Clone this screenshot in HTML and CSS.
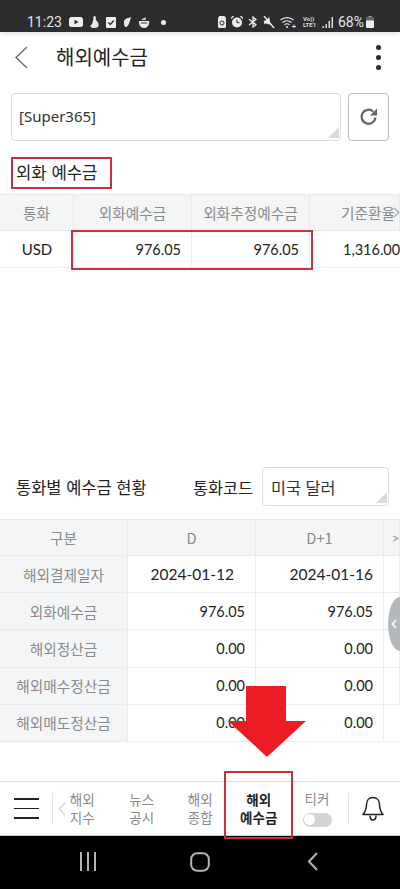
FILE: index.html
```html
<!DOCTYPE html>
<html lang="ko">
<head>
<meta charset="utf-8">
<title>해외예수금</title>
<link rel="stylesheet" href="styles.css">
</head>
<body>
<div class="phone">
  <div class="status">
    <div class="status-left">
      <span class="clock">11:23</span>
      <svg class="si" width="14" height="10" viewBox="0 0 14 10"><rect width="14" height="10" rx="2.5" fill="#eee"/><path d="M5.5 2.8v4.4L9.5 5z" fill="#2c2d2f"/></svg>
      <svg class="si" width="9" height="12" viewBox="0 0 11 12" preserveAspectRatio="none"><path d="M5.5 0c1.5 0 2 1.300 1.500 2.500L8 5c1.500.5 2.500 2 2.500 4 .5 2-2 3-5 3s-5-.5-5-2c0-1 1.500-1 2-2L3.500 5C4 4 4.500 3 4 2c0-1 .5-2 1.500-2z" fill="#e8e8e8"/></svg>
      <svg class="si" width="10" height="11" viewBox="0 0 10 11"><rect width="10" height="11" rx="1" fill="#eee"/><path d="M2.300 5.500l2 2 3.500-4" fill="none" stroke="#2c2d2f" stroke-width="1.200"/></svg>
      <svg class="si" width="9" height="10" viewBox="0 0 10 10" preserveAspectRatio="none"><path d="M1 5c0-2 3-4 5-4l3-1-2 6c-1 2-2 4-4 4C1.500 10 1 7 1 5z" fill="#e8e8e8"/></svg>
      <svg class="si" width="12" height="11" viewBox="0 0 13 11" preserveAspectRatio="none"><path d="M0 4h11v1c0 3-2 6-5.500 6S0 8 0 5z" fill="#eee"/><path d="M3 3c0-2 3-1 4-3 1 2 0 3-1 3z" fill="#ddd"/><path d="M2 6h7" stroke="#2c2d2f"/></svg>
      <span class="dot"></span>
    </div>
    <div class="status-right">
      <svg class="si" width="8" height="12" viewBox="0 0 8 12"><path d="M1.500 0h5L8 2v9l-1 1H1l-1-1V2z" fill="#e8e8e8"/><circle cx="4" cy="7" r="2" fill="none" stroke="#2c2d2f"/></svg>
      <svg class="si" width="12" height="12" viewBox="0 0 12 12"><circle cx="6" cy="6.500" r="5" fill="#eee"/><path d="M6 3.500v3.200h2.500" fill="none" stroke="#2c2d2f"/><path d="M0 2.500L2.500 0M12 2.500L9.500 0" stroke="#eee" stroke-width="1.300"/></svg>
      <svg class="si" width="10" height="12" viewBox="0 0 10 12"><path d="M1 3.200l7 5.500L5 11V1l3 2.500-7 5.500" fill="none" stroke="#eee" stroke-width="1.300"/></svg>
      <svg class="si" width="12" height="12" viewBox="0 0 12 12"><path d="M1 4h2l4-3v8L3 7H1z" fill="#eee" transform="rotate(-8 6 6)"/><path d="M1 0l10 12" stroke="#eee" stroke-width="1.400"/></svg>
      <svg class="si" width="16" height="12" viewBox="0 0 16 12"><path d="M.5 4a10 10 0 0 1 13 0M2.500 6.500a7 7 0 0 1 9 0M4.500 8.800a4 4 0 0 1 5 0" fill="none" stroke="#eee" stroke-width="1.100"/><circle cx="7" cy="11" r="1" fill="#eee"/><path d="M12 10.500h4M14 8.500v4" stroke="#ddd"/></svg>
      <span class="volte">Vo)) <br>LTE1</span>
      <svg class="si" width="11" height="11" viewBox="0 0 11 11"><path d="M.5 9h1.400v2H.5zM3.500 7h1.400v4H3.500zM6.500 4H8v7H6.500zM9.500 0H11v11H9.500z" fill="#ddd"/></svg>
      <span class="batt-text">68%</span>
      <svg class="si" width="8" height="12" viewBox="0 0 8 12"><rect x="2.500" width="3" height="2" fill="#aaa"/><rect y="1" width="8" height="11" rx="1.200" fill="#666"/><path d="M0 4.500h8V11l-1 1H1l-1-1z" fill="#eee"/></svg>
    </div>
  </div>

  <header class="top">
    <svg class="back" width="14" height="23" viewBox="0 0 14 23"><path d="M13 1L2 11.500 13 22" fill="none" stroke="#666" stroke-width="1.300"/></svg>
    <h1 class="title">해외예수금</h1>
    <div class="kebab"><span></span><span></span><span></span></div>
  </header>

  <main class="content">
    <div class="account-row">
      <div class="select account"><span>[Super365]</span><i class="grip"></i></div>
      <button class="refresh" type="button">
        <svg width="20" height="20" viewBox="0 0 20 20"><path d="M16.500 10.500a7 7 0 1 1-2.300-6" fill="none" stroke="#666" stroke-width="2.300"/><path d="M18 1.500v7h-7z" fill="#666"/></svg>
      </button>
    </div>

    <div class="section-head"><h2 class="section-title">외화 예수금</h2></div>

    <div class="grid grid-top">
      <div class="hc">통화</div><div class="hc">외화예수금</div><div class="hc">외화추정예수금</div><div class="hc hc-clip">기준환율<i class="more-tri"></i></div>
      <div class="dc ctr">USD</div><div class="dc">976.05</div><div class="dc">976.05</div><div class="dc dc-clip">1,316.00</div>
    </div>

    <div class="sub-row">
      <h3 class="sub-title">통화별 예수금 현황</h3>
      <span class="code-label">통화코드</span>
      <div class="select currency"><span>미국 달러</span><i class="grip"></i></div>
    </div>

    <div class="grid grid-bottom">
      <div class="hc">구분</div><div class="hc">D</div><div class="hc">D+1</div><div class="hc hc-more">&gt;</div>
      <div class="lc">해외결제일자</div><div class="dc date date-first">2024-01-12</div><div class="dc date">2024-01-16</div><div class="dc"></div>
      <div class="lc">외화예수금</div><div class="dc">976.05</div><div class="dc">976.05</div><div class="dc"></div>
      <div class="lc">해외정산금</div><div class="dc">0.00</div><div class="dc">0.00</div><div class="dc"></div>
      <div class="lc">해외매수정산금</div><div class="dc">0.00</div><div class="dc">0.00</div><div class="dc"></div>
      <div class="lc">해외매도정산금</div><div class="dc">0.00</div><div class="dc">0.00</div><div class="dc"></div>
    </div>
  </main>

  <nav class="tabs">
    <div class="burger"><span></span><span></span><span></span></div>
    <div class="vline"></div>
    <svg class="tab-prev" width="8" height="14" viewBox="0 0 8 14"><path d="M7 1L1.500 7 7 13" fill="none" stroke="#ddd" stroke-width="1.800"/></svg>
    <div class="tab">해외<br>지수</div>
    <div class="tab">뉴스<br>공시</div>
    <div class="tab">해외<br>종합</div>
    <div class="tab active">해외<br>예수금</div>
    <div class="tab ticker">티커<span class="toggle"><span class="knob"></span></span></div>
    <div class="vline vline-right"></div>
    <svg class="bell" width="22" height="26" viewBox="0 0 22 26"><path d="M11 1.500c-4 0-6.500 3-6.500 7 0 5-1.500 7.500-3.500 10h20c-2-2.500-3.500-5-3.500-10 0-4-2.500-7-6.500-7z" fill="none" stroke="#222" stroke-width="1.500" stroke-linejoin="round"/><path d="M8 19.500c0 3 1.500 4.500 3 4.500s3-1.500 3-4.500" fill="none" stroke="#222" stroke-width="1.500"/></svg>
  </nav>

  <div class="sysbar">
    <svg width="18" height="19" viewBox="0 0 18 19"><path d="M2 0v19M9 0v19M16 0v19" stroke="#b5b5b5" stroke-width="2"/></svg>
    <svg width="20" height="20" viewBox="0 0 20 20"><rect x="1.200" y="1.200" width="17.600" height="17.600" rx="6" fill="none" stroke="#b5b5b5" stroke-width="2"/></svg>
    <svg class="sys-back" width="11" height="19" viewBox="0 0 11 19"><path d="M10 1L2 9.500 10 18" fill="none" stroke="#b5b5b5" stroke-width="2"/></svg>
  </div>

  <div class="mark mark-title"></div>
  <div class="mark mark-values"></div>
  <div class="mark mark-tab"></div>
  <div class="handle"><svg width="6" height="10" viewBox="0 0 6 10"><path d="M5 1L1.500 5 5 9" fill="none" stroke="#fff" stroke-width="1.800"/></svg></div>
  <svg class="arrow" width="78" height="71" viewBox="0 0 78 71"><path d="M18 0h40v35h20L39 71 0 35h18z" fill="#ed1c24"/></svg>
</div>
</body>
</html>
```
FILE: styles.css
```css
* { box-sizing: border-box; }
html, body { margin: 0; padding: 0; background: #fff; }
body { font-family: "Lato", "Noto Sans CJK KR", sans-serif; color: #222; }
.phone { position: relative; width: 400px; height: 889px; overflow: hidden; display: flex; flex-direction: column; }

.status { height: 32px; flex: none; background: #2c2d2f; color: #e4e4e4; display: flex; justify-content: space-between; align-items: flex-end; padding: 0 26px 3px 27px; box-shadow: 0 2px 5px rgba(0,0,0,.12); position: relative; }
.status-left, .status-right { display: flex; align-items: center; height: 14px; }
.status-left { gap: 7px; }
.status-right { gap: 5px; }
.si { display: block; flex: none; }
.clock { font: 14px/14px "Roboto", sans-serif; margin-right: -1px; width: 36px; }
.dot { width: 5px; height: 5px; border-radius: 50%; background: #eee; margin-left: 3px; }
.volte { font: 700 6px/6.500px "Roboto", sans-serif; width: 14px; color: #ddd; white-space: nowrap; margin-left: 2px; }
.batt-text { font: 14px/14px "Roboto", sans-serif; margin-left: 0; margin-right: -3px; }

.top { height: 51px; flex: none; display: flex; align-items: center; padding: 0 19px 0 14px; }
.back { flex: none; margin-right: 28px; }
.title { margin: 0 0 2px; flex: 1; font: 400 20px/24px "Noto Sans CJK KR", sans-serif; color: #222; }
.kebab { display: flex; flex-direction: column; gap: 5px; }
.kebab span { width: 5px; height: 5px; border-radius: 50%; background: #2a2a2a; }

.content { flex: 1; min-height: 0; display: flex; flex-direction: column; }
.account-row { display: flex; gap: 7px; padding: 10px 11px 0; height: 58px; flex: none; }
.select { position: relative; background: #fff; border: 1px solid #dcdcdc; border-radius: 4px; display: flex; align-items: center; font-size: 15px; color: #333; }
.account { flex: 1; padding: 0 7px; }
.account span { font-family: "Noto Sans", sans-serif; font-size: 15px; position: relative; top: -1px; }
.grip { position: absolute; right: 1px; bottom: 2px; width: 0; height: 0; border-style: solid; border-width: 0 0 11px 11px; border-color: transparent transparent #d8d8d8 transparent; }
.refresh { width: 41px; padding: 0; background: #fff; border: 1px solid #bbb; border-radius: 4px; display: flex; align-items: center; justify-content: center; }

.section-head { height: 53px; flex: none; padding: 16px 0 0 16px; }
.section-title { margin: 0; font: 400 16.700px/31px "Noto Sans CJK KR", sans-serif; color: #222; }

.grid { display: grid; flex: none; background: #fff; }
.grid-top { grid-template-columns: 74px 118px 118px 90px; grid-auto-rows: 37px; height: 247px; }
.grid-bottom { grid-template-columns: 128px 128px 128px 16px; grid-template-rows: 37px repeat(5, 37.200px); height: 224px; }
.hc, .lc { background: #f4f5f7; color: #8a8a8a; font-family: "Noto Sans CJK KR", sans-serif; font-size: 14.700px; display: flex; align-items: center; justify-content: center; white-space: nowrap; border-right: 1px solid #e8eaed; border-bottom: 1px solid #e8eaed; }
.hc { border-top: 1px solid #e8eaed; }
.hc:last-child, .dc:last-child { border-right: 0; }
.hc-clip { justify-content: flex-start; padding-left: 31px; overflow: hidden; position: relative; }
.more-tri { position: absolute; right: 1px; top: 14px; width: 7px; height: 7px; border-top: 1.500px solid #999; border-right: 1.500px solid #999; transform: rotate(45deg); }
.hc-more { font-family: "Lato", sans-serif; font-size: 14px; color: #999; overflow: hidden; padding-left: 8px; }
.dc { display: flex; align-items: center; justify-content: flex-end; padding-right: 10px; font-size: 14.500px; color: #222; white-space: nowrap; border-right: 1px solid #eceef0; border-bottom: 1px solid #eceef0; }
.ctr { justify-content: center; padding-right: 0; padding-left: 1px; font-size: 15px; }
.date { font-size: 15.500px; }
.date-first { padding-right: 21px; }
.dc-clip { justify-content: flex-start; padding: 0 0 0 33px; overflow: hidden; }

.sub-row { display: flex; align-items: center; height: 78px; flex: none; padding: 26px 11px 13px 16px; }
.sub-title { margin: 0; font: 400 16.500px/20px "Noto Sans CJK KR", sans-serif; color: #222; width: 177px; white-space: nowrap; }
.code-label { font: 400 16.300px/20px "Noto Sans CJK KR", sans-serif; width: 69px; white-space: nowrap; }
.currency { flex: 1; height: 39px; padding: 0 8px; font-family: "Noto Sans CJK KR", sans-serif; font-size: 16.300px; }

.tabs { height: 55px; flex: none; background: #fff; border-top: 1px solid #ddd; border-bottom: 1px solid #ccc; display: flex; align-items: center; position: relative; padding-left: 14px; }
.burger { width: 25px; display: flex; flex-direction: column; gap: 8px; margin-right: 13px; }
.burger span { height: 1.500px; background: #222; }
.vline { width: 1px; height: 31px; background: #e4e4e4; flex: none; }
.vline-right { margin-left: 2px; }
.tab-prev { position: absolute; left: 58px; top: 20px; }
.tab { width: 58.500px; flex: none; text-align: center; font: 400 13.500px/18px "Noto Sans CJK KR", sans-serif; color: #8a8a8a; margin-top: -2px; }
.tab:nth-of-type(4) { margin-left: 1px; }
.tab.active { color: #222; font-weight: 700; }
.ticker { display: flex; flex-direction: column; align-items: center; gap: 6px; width: 58px; }
.toggle { display: block; width: 29px; height: 14px; border-radius: 7px; background: #d4d4d4; position: relative; }
.knob { position: absolute; left: 1.500px; top: 1.500px; width: 11px; height: 11px; border-radius: 50%; background: #fff; }
.bell { flex: none; margin-left: 13px; }

.sysbar { height: 53px; flex: none; background: #000; display: flex; align-items: center; gap: 93px; padding: 0 0 2px 79px; }
.sys-back { margin-left: 4px; }

.mark { position: absolute; border: 2px solid #c8323c; pointer-events: none; }
.mark-title { left: 11px; top: 157px; width: 101px; height: 32px; }
.mark-values { left: 71px; top: 230px; width: 242px; height: 40px; }
.mark-tab { left: 224px; top: 771px; width: 69px; height: 68px; }
.handle { position: absolute; left: 388px; top: 597px; width: 24px; height: 54px; border-radius: 50%; background: #b4b8bc; display: flex; align-items: center; padding-left: 3px; }
.arrow { position: absolute; left: 228px; top: 686px; display: block; }
```
